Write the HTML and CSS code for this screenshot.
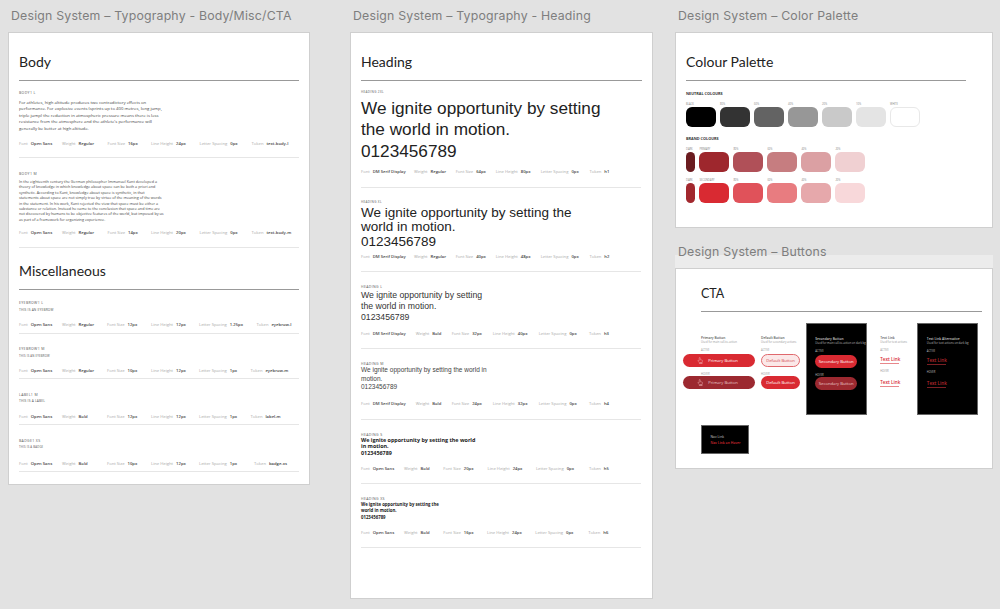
FILE: index.html
```html
<!DOCTYPE html>
<html lang="en">
<head>
<meta charset="utf-8">
<title>Design System</title>
<link rel="stylesheet" href="styles.css">
</head>
<body>
<div class="canvas">
  <section class="col col-1">
    <h2 class="frame-title">Design System – Typography - Body/Misc/CTA</h2>
    <div class="frame frame-body">
      <h3 class="sec">Body</h3>
      <div class="row r-bl">
        <div class="lbl">BODY1 L</div>
        <p class="bl">For athletes, high altitude produces two contradictory effects on performance. For explosive events (sprints up to 400 metres, long jump, triple jump) the reduction in atmospheric pressure means there is less resistance from the atmosphere and the athlete's performance will generally be better at high altitude.</p>
        <div class="meta m-body"><div class="m"><span>Font</span><b>Open Sans</b></div><div class="m"><span>Weight</span><b>Regular</b></div><div class="m"><span>Font Size</span><b>16px</b></div><div class="m"><span>Line Height</span><b>24px</b></div><div class="m"><span>Letter Spacing</span><b>0px</b></div><div class="m"><span>Token</span><b>text-body-l</b></div></div>
      </div>
      <div class="row r-bm">
        <div class="lbl">BODY1 M</div>
        <p class="bm">In the eighteenth century the German philosopher Immanuel Kant developed a theory of knowledge in which knowledge about space can be both a priori and synthetic. According to Kant, knowledge about space is synthetic, in that statements about space are not simply true by virtue of the meaning of the words in the statement. In his work, Kant rejected the view that space must be either a substance or relation. Instead he came to the conclusion that space and time are not discovered by humans to be objective features of the world, but imposed by us as part of a framework for organizing experience.</p>
        <div class="meta m-body"><div class="m"><span>Font</span><b>Open Sans</b></div><div class="m"><span>Weight</span><b>Regular</b></div><div class="m"><span>Font Size</span><b>14px</b></div><div class="m"><span>Line Height</span><b>20px</b></div><div class="m"><span>Letter Spacing</span><b>0px</b></div><div class="m"><span>Token</span><b>text-body-m</b></div></div>
      </div>
      <h3 class="sec sec-misc">Miscellaneous</h3>
      <div class="row r-misc r-m1">
        <div class="lbl">EYEBROW1 L</div>
        <div class="mini">THIS IS AN EYEBROW</div>
        <div class="meta m-el"><div class="m"><span>Font</span><b>Open Sans</b></div><div class="m"><span>Weight</span><b>Regular</b></div><div class="m"><span>Font Size</span><b>12px</b></div><div class="m"><span>Line Height</span><b>12px</b></div><div class="m"><span>Letter Spacing</span><b>1.25px</b></div><div class="m"><span>Token</span><b>eyebrow-l</b></div></div>
      </div>
      <div class="row r-misc r-m2">
        <div class="lbl">EYEBROW1 M</div>
        <div class="mini mini-s">THIS IS AN EYEBROW</div>
        <div class="meta m-em"><div class="m"><span>Font</span><b>Open Sans</b></div><div class="m"><span>Weight</span><b>Regular</b></div><div class="m"><span>Font Size</span><b>10px</b></div><div class="m"><span>Line Height</span><b>12px</b></div><div class="m"><span>Letter Spacing</span><b>1px</b></div><div class="m"><span>Token</span><b>eyebrow-m</b></div></div>
      </div>
      <div class="row r-misc r-m3">
        <div class="lbl">LABEL1 M</div>
        <div class="mini">THIS IS A LABEL</div>
        <div class="meta m-em"><div class="m"><span>Font</span><b>Open Sans</b></div><div class="m"><span>Weight</span><b>Bold</b></div><div class="m"><span>Font Size</span><b>12px</b></div><div class="m"><span>Line Height</span><b>12px</b></div><div class="m"><span>Letter Spacing</span><b>1px</b></div><div class="m"><span>Token</span><b>label-m</b></div></div>
      </div>
      <div class="row r-misc r-m4">
        <div class="lbl">BADGE1 XS</div>
        <div class="mini mini-s">THIS IS A BADGE</div>
        <div class="meta m-bd"><div class="m"><span>Font</span><b>Open Sans</b></div><div class="m"><span>Weight</span><b>Bold</b></div><div class="m"><span>Font Size</span><b>10px</b></div><div class="m"><span>Line Height</span><b>12px</b></div><div class="m"><span>Letter Spacing</span><b>1px</b></div><div class="m"><span>Token</span><b>badge-xs</b></div></div>
      </div>
    </div>
  </section>

  <section class="col col-2">
    <h2 class="frame-title">Design System – Typography - Heading</h2>
    <div class="frame frame-head">
      <h3 class="sec">Heading</h3>
      <div class="row r-h1">
        <div class="lbl lbl-s">HEADING 2XL</div>
        <div class="h1">We ignite opportunity by setting the world in motion.<br>0123456789</div>
        <div class="meta m-h1"><div class="m"><span>Font</span><b>DM Serif Display</b></div><div class="m"><span>Weight</span><b>Regular</b></div><div class="m"><span>Font Size</span><b>64px</b></div><div class="m"><span>Line Height</span><b>80px</b></div><div class="m"><span>Letter Spacing</span><b>0px</b></div><div class="m"><span>Token</span><b>h1</b></div></div>
      </div>
      <div class="row r-h2">
        <div class="lbl lbl-s">HEADING XL</div>
        <div class="h2">We ignite opportunity by setting the world in motion.<br>0123456789</div>
        <div class="meta m-h1"><div class="m"><span>Font</span><b>DM Serif Display</b></div><div class="m"><span>Weight</span><b>Regular</b></div><div class="m"><span>Font Size</span><b>40px</b></div><div class="m"><span>Line Height</span><b>48px</b></div><div class="m"><span>Letter Spacing</span><b>0px</b></div><div class="m"><span>Token</span><b>h2</b></div></div>
      </div>
      <div class="row r-h3">
        <div class="lbl">HEADING L</div>
        <div class="h3">We ignite opportunity by setting the world in motion.<br>0123456789</div>
        <div class="meta m-h3"><div class="m"><span>Font</span><b>DM Serif Display</b></div><div class="m"><span>Weight</span><b>Bold</b></div><div class="m"><span>Font Size</span><b>32px</b></div><div class="m"><span>Line Height</span><b>40px</b></div><div class="m"><span>Letter Spacing</span><b>0px</b></div><div class="m"><span>Token</span><b>h3</b></div></div>
      </div>
      <div class="row r-h4">
        <div class="lbl">HEADING M</div>
        <div class="h4">We ignite opportunity by setting the world in motion.<br>0123456789</div>
        <div class="meta m-h3"><div class="m"><span>Font</span><b>DM Serif Display</b></div><div class="m"><span>Weight</span><b>Bold</b></div><div class="m"><span>Font Size</span><b>24px</b></div><div class="m"><span>Line Height</span><b>32px</b></div><div class="m"><span>Letter Spacing</span><b>0px</b></div><div class="m"><span>Token</span><b>h4</b></div></div>
      </div>
      <div class="row r-h5">
        <div class="lbl">HEADING S</div>
        <div class="h5">We ignite opportunity by setting the world in motion.<br>0123456789</div>
        <div class="meta m-h5"><div class="m"><span>Font</span><b>Open Sans</b></div><div class="m"><span>Weight</span><b>Bold</b></div><div class="m"><span>Font Size</span><b>20px</b></div><div class="m"><span>Line Height</span><b>24px</b></div><div class="m"><span>Letter Spacing</span><b>0px</b></div><div class="m"><span>Token</span><b>h5</b></div></div>
      </div>
      <div class="row r-h5">
        <div class="lbl">HEADING XS</div>
        <div class="h6">We ignite opportunity by setting the world in motion.<br>0123456789</div>
        <div class="meta m-h6"><div class="m"><span>Font</span><b>Open Sans</b></div><div class="m"><span>Weight</span><b>Bold</b></div><div class="m"><span>Font Size</span><b>16px</b></div><div class="m"><span>Line Height</span><b>24px</b></div><div class="m"><span>Letter Spacing</span><b>0px</b></div><div class="m"><span>Token</span><b>h6</b></div></div>
      </div>
    </div>
  </section>

  <section class="col col-3">
    <h2 class="frame-title">Design System – Color Palette</h2>
    <div class="frame frame-pal">
      <h3 class="sec sec-w">Colour Palette</h3>
      <div class="pal-h pal-h1">NEUTRAL COLOURS</div>
      <div class="swatches">
        <div class="sw"><small>BLACK</small><i class="c-k"></i></div>
        <div class="sw"><small>80%</small><i class="c-80"></i></div>
        <div class="sw"><small>60%</small><i class="c-60"></i></div>
        <div class="sw"><small>40%</small><i class="c-40"></i></div>
        <div class="sw"><small>20%</small><i class="c-20"></i></div>
        <div class="sw"><small>10%</small><i class="c-10"></i></div>
        <div class="sw"><small>WHITE</small><i class="c-w"></i></div>
      </div>
      <div class="pal-h pal-h2">BRAND COLOURS</div>
      <div class="swatches">
        <div class="sw sw-n"><small>DARK</small><i class="a-d"></i></div>
        <div class="sw"><small>PRIMARY</small><i class="a-0"></i></div>
        <div class="sw"><small>80%</small><i class="a-1"></i></div>
        <div class="sw"><small>60%</small><i class="a-2"></i></div>
        <div class="sw"><small>40%</small><i class="a-3"></i></div>
        <div class="sw"><small>20%</small><i class="a-4"></i></div>
      </div>
      <div class="swatches swatches-2">
        <div class="sw sw-n"><small>DARK</small><i class="b-d"></i></div>
        <div class="sw"><small>SECONDARY</small><i class="b-0"></i></div>
        <div class="sw"><small>80%</small><i class="b-1"></i></div>
        <div class="sw"><small>60%</small><i class="b-2"></i></div>
        <div class="sw"><small>40%</small><i class="b-3"></i></div>
        <div class="sw"><small>20%</small><i class="b-4"></i></div>
      </div>
    </div>
    <h2 class="frame-title title-btn">Design System – Buttons</h2>
    <div class="band"></div>
    <div class="frame frame-cta">
      <h3 class="sec sec-cta">CTA</h3>
      <div class="cta-grid">
        <div class="cta c-primary">
          <div class="ct">Primary Button</div>
          <div class="cd">Used for main call-to-action</div>
          <div class="cs">ACTIVE</div>
          <div class="btn b-red b-wide"><svg class="hand" viewBox="0 0 10 12" aria-hidden="true"><path d="M3.6 6.2V1.6a.9.9 0 0 1 1.8 0v3l3 .7a1 1 0 0 1 .8 1.1l-.4 3.1H3.9L1.3 7.1c-.5-.7.4-1.5 1.1-1z"/><path d="M3.9 10.6h4.8v1H3.9z"/></svg>Primary Button</div>
          <div class="cs cs-2">HOVER</div>
          <div class="btn b-dark b-wide"><svg class="hand" viewBox="0 0 10 12" aria-hidden="true"><path d="M3.6 6.2V1.6a.9.9 0 0 1 1.8 0v3l3 .7a1 1 0 0 1 .8 1.1l-.4 3.1H3.9L1.3 7.1c-.5-.7.4-1.5 1.1-1z"/><path d="M3.9 10.6h4.8v1H3.9z"/></svg>Primary Button</div>
        </div>
        <div class="cta c-default">
          <div class="ct">Default Button</div>
          <div class="cd">Used for secondary actions</div>
          <div class="cs">ACTIVE</div>
          <div class="btn b-pale">Default Button</div>
          <div class="cs cs-2">HOVER</div>
          <div class="btn b-red">Default Button</div>
        </div>
        <div class="cta black c-sec">
          <div class="ct">Secondary Button</div>
          <div class="cd">Used for main call-to-action on dark bg</div>
          <div class="cs">ACTIVE</div>
          <div class="btn b-red">Secondary Button</div>
          <div class="cs cs-2">HOVER</div>
          <div class="btn b-dark">Secondary Button</div>
        </div>
        <div class="cta c-link">
          <div class="ct">Text Link</div>
          <div class="cd">Used for text actions</div>
          <div class="cs">ACTIVE</div>
          <div class="tl">Text Link</div>
          <div class="cs cs-2">HOVER</div>
          <div class="tl">Text Link</div>
        </div>
        <div class="cta black c-alt">
          <div class="ct">Text Link Alternative</div>
          <div class="cd">Used for text actions on dark bg</div>
          <div class="cs">ACTIVE</div>
          <div class="tl tl-d">Text Link</div>
          <div class="cs cs-2">HOVER</div>
          <div class="tl tl-d">Text Link</div>
        </div>
      </div>
      <div class="nav-card">
        <div class="nav-a">Nav Link</div>
        <div class="nav-b">Nav Link on Hover</div>
      </div>
    </div>
  </section>
</div>
</body>
</html>
```

FILE: styles.css
```css
* { box-sizing: border-box; }
html, body { margin: 0; padding: 0; }
body { width: 1000px; height: 609px; overflow: hidden; background: #e2e2e2; font-family: "Open Sans", sans-serif; color: #333; }
.canvas { display: flex; padding-top: 7px; padding-left: 8px; }
.col-1 { width: 302px; margin-right: 40px; }
.col-2 { width: 303px; margin-right: 22px; }
.col-3 { width: 318px; }
.frame-title { margin: 0 0 0 3px; height: 25px; font: 400 12.3px/17px Inter, sans-serif; letter-spacing: .2px; color: #7e7e7e; white-space: nowrap; }
.frame { background: #fff; border: 1px solid #cfcfcf; padding-left: 10px; padding-right: 10px; }
.frame-body { height: 453px; }
.frame-head { height: 567px; }
.frame-pal { height: 195.5px; }
.frame-cta { height: 201px; padding-left: 25px; }
.sec { margin: 0; padding-top: 20px; height: 48px; border-bottom: 1px solid #999; font: 400 14px/17px Lato, sans-serif; color: #222; }
.sec-w { width: 280px; }
.sec-misc { padding-top: 14px; height: 42px; }
.row { border-bottom: 1px solid #e6e6e6; width: 280px; padding-top: 9px; }
.lbl { font-size: 3.5px; line-height: 5px; letter-spacing: .35px; color: #555; }
.lbl-s { font-size: 3px; }
.bl, .bm { margin: 0; color: #444; }
.bl { font-size: 4.27px; width: 150px; line-height: 6.45px; margin-top: 4px; height: 32px; }
.bm { font-size: 3.75px; width: 146px; line-height: 5.4px; margin-top: 3px; height: 43px; }
.meta { display: grid; font-size: 4.2px; line-height: 6px; color: #aaa; white-space: nowrap; }
.m { display: flex; }
.m b { font-weight: 600; color: #444; margin-left: 3px; }
.m-body { grid-template-columns: 43px 45.5px 43.5px 48.5px 52px auto; margin-top: 10px; }
.m-el { grid-template-columns: 43px 45px 44px 48px 57.5px auto; }
.m-em { grid-template-columns: 43px 45px 44px 48px 51.5px auto; }
.m-bd { grid-template-columns: 43px 45px 44px 48px 55px auto; }
.m-h1 { grid-template-columns: 53px 41.7px 40px 45px 48.7px auto; }
.m-h3 { grid-template-columns: 54.7px 36px 41px 46px 50.3px auto; }
.m-h5 { grid-template-columns: 43px 39.3px 44.3px 48.3px 53px auto; }
.m-h6 { grid-template-columns: 43px 39.3px 43.7px 48.3px 53px auto; }
.r-bl { height: 77px; }
.r-bm { height: 90px; padding-top: 13px; }
.r-bm .meta { margin-top: 8px; }
.r-misc { padding-top: 12.5px; }
.r-m1 { height: 43.5px; padding-top: 10px; }
.r-m2 { height: 45.5px; }
.r-m3 { height: 46px; }
.r-m4 { height: 47px; }
.mini { font-size: 3.2px; line-height: 5px; margin-top: 2.5px; color: #555; letter-spacing: .2px; }
.mini-s { font-size: 2.8px; }
.r-misc .meta { margin-top: 9.5px; }
.r-m4 .meta { margin-top: 11px; }
.h1, .h2, .h3, .h4 { font-family: "Liberation Sans", Arial, sans-serif; color: #222; }
.h1 { font-size: 17.2px; line-height: 21.5px; width: 250px; margin-top: 2.5px; }
.h2 { font-size: 13.5px; line-height: 14.4px; width: 225px; margin-top: 1px; }
.h3 { font-size: 8.7px; line-height: 11px; width: 125px; margin-top: 1px; color: #333; }
.h4 { font-size: 6.5px; line-height: 8.7px; width: 128px; color: #444; }
.h5 { font: 700 5.4px/6.4px "Open Sans", sans-serif; width: 118px; color: #222; }
.h6 { font: 700 4.3px/6.4px "Open Sans", sans-serif; width: 82px; color: #222; }
.r-h1 { height: 107px; padding-top: 9px; }
.r-h1 .meta { margin-top: 7px; }
.r-h2 { height: 84px; padding-top: 12px; }
.r-h2 .meta { margin-top: 5px; }
.r-h3 { height: 77px; padding-top: 12px; }
.r-h3 .meta { margin-top: 8px; }
.r-h4 { height: 71px; padding-top: 12px; }
.r-h4 .meta { margin-top: 9px; }
.r-h5 { height: 64px; padding-top: 12px; }
.r-h5 .meta { margin-top: 9.5px; }
.pal-h { font-size: 3.8px; font-weight: 700; line-height: 5px; color: #333; }
.pal-h1 { margin-top: 10px; }
.pal-h2 { margin-top: 9px; }
.swatches { display: flex; gap: 4px; margin-top: 6px; }
.swatches-2 { margin-top: 6px; }
.sw { width: 30px; }
.sw-n { width: 9.4px; }
.sw small { display: block; font-size: 2.6px; line-height: 4px; color: #888; white-space: nowrap; }
.sw i { display: block; height: 20px; border-radius: 6px; margin-top: 1px; }
.sw-n i { border-radius: 5px; }
.c-k { background: #000; }
.c-80 { background: #333; }
.c-60 { background: #636363; }
.c-40 { background: #979797; }
.c-20 { background: #c9c9c9; }
.c-10 { background: #e4e4e4; }
.c-w { background: #fff; border: 1px solid #e8e8e8; }
.a-d { background: #6b1c20; }
.a-0 { background: #9e272d; }
.a-1 { background: #b05058; }
.a-2 { background: #c67d80; }
.a-3 { background: #dba0a3; }
.a-4 { background: #f0d0d2; }
.b-d { background: #a2282e; }
.b-0 { background: #d92a32; }
.b-1 { background: #e0525a; }
.b-2 { background: #e87c80; }
.b-3 { background: #e6a8ab; }
.b-4 { background: #f8d8da; }
.band { height: 13px; margin-top: -3px; background: #ececec; }
.title-btn { margin-top: 15.5px; height: 15px; }
.sec-cta { width: 281px; padding-top: 16px; height: 43px; font-size: 12.5px; }
.cta-grid { display: grid; grid-template-columns: 60px 44.7px 61px 50.6px 61px; margin-top: 11px; height: 92px; }
.cta { padding-top: 13px; height: 92px; }
.black { background: #000; padding-left: 8.5px; padding-right: 8.5px; color: #ccc; border: 1px solid #666; }
.ct { font-size: 3.3px; line-height: 4px; color: #555; font-weight: 600; white-space: nowrap; }
.cd { font-size: 2.8px; line-height: 4px; color: #999; white-space: nowrap; }
.black .ct { color: #ccc; }
.black .cd { color: #bbb; }
.cs { font-size: 2.6px; line-height: 4px; margin-top: 4px; margin-bottom: 2px; color: #999; }
.black .cs { color: #bbb; }
.cs-2 { margin-top: 5px; margin-bottom: 0; }
.btn { height: 13px; border-radius: 7px; display: flex; align-items: center; justify-content: center; font-size: 4.2px; font-weight: 500; color: #fff; white-space: nowrap; }
.b-wide { width: 72px; margin-left: -18px; padding-left: 8px; position: relative; }
.c-default .btn { width: 39px; }
.b-red { background: #d92a32; }
.b-dark { background: #9c2930; color: #e8c8ca; }
.b-pale { background: #fbe8e8; border: 1px solid #e0686d; color: #d24a50; }
.hand { position: absolute; left: 13.5px; top: 3px; width: 6px; height: 7px; fill: none; stroke: #f3b6b8; stroke-width: .8; }
.c-link { padding-left: 13.5px; }
.tl { font-size: 4.6px; font-weight: 600; line-height: 6px; color: #d92a32; border-bottom: 1px solid #e8878b; width: 19px; margin-top: 4px; margin-bottom: 3px; white-space: nowrap; height: 8px; }
.cs-2 + .tl { margin-top: 6px; }
.tl-d { color: #b5282e; border-bottom-color: #7a1f24; }
.nav-card { width: 48px; height: 29px; margin-top: 9.5px; background: #000; padding: 8px 0 0 8.5px; border: 1px solid #666; white-space: nowrap; }
.nav-a { font-size: 3.4px; line-height: 6px; color: #ccc; }
.nav-b { font-size: 3.4px; line-height: 6px; color: #d92a32; font-weight: 600; }
```
